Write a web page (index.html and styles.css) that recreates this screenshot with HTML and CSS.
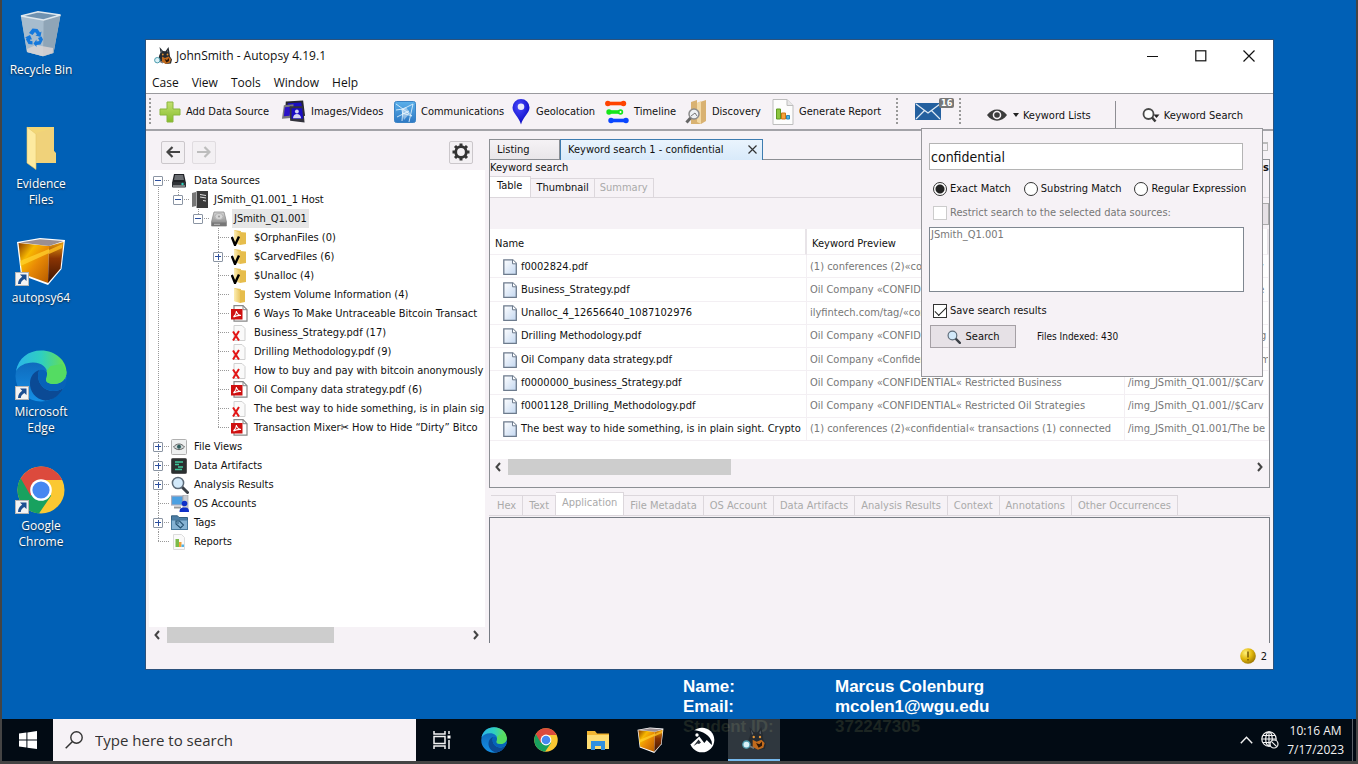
FILE: index.html
```html
<!DOCTYPE html>
<html lang="en">
<head>
<meta charset="utf-8">
<title>JohnSmith - Autopsy 4.19.1</title>
<link rel="stylesheet" href="styles.css">
</head>
<body>
<svg class="defs" aria-hidden="true">
  <defs>
    <linearGradient id="gGreen" x1="0" y1="0" x2="0" y2="1"><stop offset="0" stop-color="#c3e06f"/><stop offset="1" stop-color="#86bd2c"/></linearGradient>
    <linearGradient id="gFolder" x1="0" y1="0" x2="1" y2="0"><stop offset="0" stop-color="#fdeeb2"/><stop offset="1" stop-color="#eac765"/></linearGradient>
    <linearGradient id="gCube" x1="0" y1="0" x2="1" y2="1"><stop offset="0" stop-color="#8a3a00"/><stop offset=".3" stop-color="#f7b800"/><stop offset=".55" stop-color="#e98a05"/><stop offset="1" stop-color="#b65a00"/></linearGradient>
    <linearGradient id="gCubeR" x1="0" y1="0" x2="0" y2="1"><stop offset="0" stop-color="#e39a10"/><stop offset=".4" stop-color="#8a3403"/><stop offset="1" stop-color="#3d1503"/></linearGradient>
    <linearGradient id="gEdgeA" x1="0" y1="0" x2="1" y2="0"><stop offset="0" stop-color="#2bb5ea"/><stop offset=".5" stop-color="#2fcfc0"/><stop offset="1" stop-color="#6be04a"/></linearGradient>
    <linearGradient id="gEdgeB" x1="0" y1="0" x2="0" y2="1"><stop offset="0" stop-color="#0d5fb0"/><stop offset="1" stop-color="#1590e6"/></linearGradient>
    <linearGradient id="gDoc" x1="0" y1="0" x2="1" y2="1"><stop offset="0" stop-color="#ffffff"/><stop offset="1" stop-color="#c3d7f0"/></linearGradient>
    <linearGradient id="gSky" x1="0" y1="0" x2="0" y2="1"><stop offset="0" stop-color="#5bb0ea"/><stop offset="1" stop-color="#2d78c4"/></linearGradient>
    <radialGradient id="gPin" cx=".4" cy=".3" r=".8"><stop offset="0" stop-color="#4a4aff"/><stop offset="1" stop-color="#0000b8"/></radialGradient>
    <radialGradient id="gGold" cx=".35" cy=".3" r=".8"><stop offset="0" stop-color="#fff07a"/><stop offset=".5" stop-color="#e2b80c"/><stop offset="1" stop-color="#8f6a00"/></radialGradient>
    <linearGradient id="gHdd" x1="0" y1="0" x2="0" y2="1"><stop offset="0" stop-color="#d6d6d6"/><stop offset="1" stop-color="#7d7d7d"/></linearGradient>

    <symbol id="shortcut" viewBox="0 0 14 14"><rect x=".5" y=".5" width="13" height="13" fill="#f4f4f4" stroke="#b5b5b5"/><path d="M5 2.500h6.500V9L9.300 6.900C7 8.600 6 9.800 5.800 12H3c.1-3.300 1.500-5.400 4.200-7.200z" fill="#1d4f91"/></symbol>

    <symbol id="bin" viewBox="0 0 42 46">
      <path d="M1 5 18 .8 40.500 4 33.500 42 23 45.200 7 41z" fill="#b9c7d3"/>
      <path d="M1 5 23.500 9 23 45.200 7 41z" fill="#a7bccd"/><path d="M23.500 9 40.500 4 33.500 42 23 45.200z" fill="#8fa5b7"/>
      <path d="M1 5 18 .8 40.500 4 23.500 9z" fill="#6f92b0" stroke="#dfe8ee" stroke-width="1.400"/>
      <path d="m7 38 9-4 17 3-.2 5L23 45.200 7 41z" fill="#ddd6d4" opacity=".8"/>
      <g fill="#1478dc"><path d="m9 22 3.500-4.500 5 .5 2.500 3.500 1.500-1-1 5.500-5-1.500 1.500-1-2-2.500-2.500 3z"/><path d="m18 27 3.500-1.500 1.500 3-2.500 5-4 .5v2l-3-3.500 3-4v2l3-.5z"/><path d="m12.500 33.500-4-.5L6 28.500 6.500 27 5 26.500l5-2.500 2 4.500-1.500-.3-.5 1.500 2.500.5z"/></g>
    </symbol>
    <symbol id="bigfolder" viewBox="0 0 30 44">
      <path d="M1 1h27v24l2 2v10H1z" fill="#f2d676"/><path d="M10 7 28 2v23l1.500 3v9H10z" fill="#f0d27a"/><path d="m1 1 9 7v35.500L1 37z" fill="#fdeaa0" stroke="#e5c86a" stroke-width=".6"/>
    </symbol>
    <symbol id="cube" viewBox="0 0 50 50">
      <path d="M1 5 24 1 49 3 45.500 32 32 48 5 38z" fill="#fff"/>
      <path d="M2.500 6 33 9 32 46 6 36.500z" fill="url(#gCube)"/><path d="M33 9 47.500 5 44.500 31.500 32 46z" fill="url(#gCubeR)"/>
      <path d="M4 5.500 24 2.200 47.500 4 33 9z" fill="#9b8f92"/><path d="M4 24 33 12l.2 4L4.500 29z" fill="#ffd22e" opacity=".75"/><path d="m33 13 13.500-6-.3 4L33 17z" fill="#ffbf20" opacity=".8"/>
    </symbol>
    <symbol id="edge" viewBox="0 0 52 52">
      <circle cx="26" cy="26" r="25.500" fill="url(#gEdgeB)"/>
      <path d="M1 21C3.500 8 13.500.5 26 .5 41 .5 51.500 11 51.500 22c0 7-5 12-12 12-6 0-8.500-2-8.500-4 0-1.600 1.500-2.500 1.500-6C32.500 18 27 12.500 18 12.500 10 12.500 4 16 1 21z" fill="url(#gEdgeA)"/>
      <path d="M30.500 50.800C20 49 14.500 41 15 32.500c.4-6 4-11 9.500-12.500-4 6 0 20 13 21 4 .3 7.500-1 11-3-4 7.500-10.500 12-18 12.800z" fill="#0b4a95"/>
      <path d="M24.500 20c4-1 7.500 1 8 4 0 3.500-1.500 4.400-1.500 6 0 2 2.500 4 8.500 4 4.500 0 8-2 10-5l2 1c0 4-1.500 7-3 8-3.500 2-7 3.300-11 3-13-1-17-15-13-21z" fill="#0762b8"/>
      <path d="M31 30c0 2 2.500 4 8.500 4 7 0 12-5 12-12l-4-8-12 2-4 5c1.500 4-.5 6.500-.5 9z" fill="#54dc62"/>
    </symbol>
    <symbol id="chrome" viewBox="0 0 48 48">
      <circle cx="24" cy="24" r="23.500" fill="#fbc832"/>
      <path d="M24 24 3.700 12.200A23.500 23.500 0 0 0 22 47.400L34.300 29.500z" fill="#18a15f"/>
      <path d="M3.700 12.200A23.500 23.500 0 0 1 45.200 14H24L13.800 30z" fill="#dc4a3d"/>
      <circle cx="24" cy="24" r="10.800" fill="#fff"/><circle cx="24" cy="24" r="8.600" fill="#4688f1"/>
    </symbol>
    <symbol id="dog" viewBox="0 0 18 18">
      <path d="M5.500 0 9 4l2.500.2L14.500 0l1 5.500.5 4 2 3-1 4-5 .5-3-2-4.500-1L5 9l1.500-3.500z" fill="#252b31"/>
      <path d="m6.800 2 1.700 3-1 1zM13.800 2.500l.6 3-1.500-.8z" fill="#5f666c"/>
      <path d="m8 9.500 3 1.500 3.500-1.500L17 12l-1 3.500-4 1.500-4-2z" fill="#c26a1c"/><path d="m10.500 12 2.500 1 2-2v3l-2.500 1.500z" fill="#2c1708"/><circle cx="8.800" cy="7.500" r=".9" fill="#e59435"/><circle cx="13.500" cy="7.500" r=".9" fill="#e59435"/>
      <circle cx="3.300" cy="13.200" r="2.700" fill="#d9f1f7" stroke="#4c9bad"/><path d="m6 14.500 3 1.500" stroke="#777" stroke-width="1.300"/>
    </symbol>

    <symbol id="plus" viewBox="0 0 22 22"><path d="M8 1h6v7h7v6h-7v7H8v-7H1V8h7z" fill="url(#gGreen)" stroke="#8ab63e"/></symbol>
    <symbol id="images" viewBox="0 0 26 24">
      <path d="m5 1 18-1 2 16-4 1H4z" fill="#26262e"/><path d="m7 3 14-1 1 5-15 3z" fill="#1b0fc0"/><path d="m3 5 10-1v14l-12 1z" fill="#77777e"/><path d="m4 7 6-.5-1 9.500-6 .5z" fill="#2a12c8"/>
      <path d="M9 6h14l1.500 17-15-2z" fill="#33333c"/><path d="M11 8h11l1 11H11z" fill="#1a0cc4"/><circle cx="16.500" cy="11.500" r="2" fill="#d5d5f0"/><path d="M12.500 18.500c0-6 8-6 8.500 0z" fill="#d5d5f0"/>
    </symbol>
    <symbol id="comm" viewBox="0 0 22 22"><rect x=".5" y=".5" width="21" height="21" rx="2" fill="url(#gSky)" stroke="#3b83c4"/><path d="m2 3 7 5 10-5M9 8l-1 12M8 12l10 3M19 3 15 21M3 16l12-6M2 9l7-1M9 8l9 7" stroke="#d9edfb" fill="none" stroke-width=".9"/><path d="m7 8 5-2 4 6-6 7z" fill="#fff" opacity=".45"/></symbol>
    <symbol id="pin" viewBox="0 0 18 26"><path d="M9 25.500C7 18 .5 14 .5 8.500a8.500 8.500 0 0 1 17 0C17.500 14 11 18 9 25.500z" fill="url(#gPin)"/><circle cx="9" cy="7.800" r="3.300" fill="#e9e9fa"/></symbol>
    <symbol id="timeline" viewBox="0 0 24 24"><g stroke-width="3.600"><path d="M2 3.500h17" stroke="#ff4300"/><path d="M4 12h12" stroke="#16e51a"/><path d="M5 20.500h17" stroke="#0a46ff"/></g><g fill="#ff4300"><circle cx="2.800" cy="3.500" r="2.700"/><circle cx="18.500" cy="3.500" r="2.700"/></g><g fill="#16e51a"><circle cx="4" cy="12" r="2.700"/><circle cx="15.500" cy="12" r="2.700"/></g><circle cx="15.500" cy="12" r="1" fill="#fff"/><g fill="#0a46ff"><circle cx="6" cy="20.500" r="2.700"/><circle cx="21" cy="20.500" r="2.700"/></g></symbol>
    <symbol id="discovery" viewBox="0 0 22 26"><path d="m6 3 6-2v3l9-3v21l-5 3H6z" fill="#d9b272"/><path d="m12 4 4-2v23l-4-2z" fill="#f3d9a5"/><circle cx="9" cy="15" r="5" fill="#eef1f3" stroke="#8b8b8b" stroke-width="1.500"/><path d="m5.500 19-4 4.500" stroke="#666" stroke-width="3"/><path d="m6 17 4-3 2 3" stroke="#777" fill="none"/></symbol>
    <symbol id="report" viewBox="0 0 22 26"><path d="M1 .5h14l6 6v19H1z" fill="#fdfdfd" stroke="#bdbdbd"/><path d="M15 .5v6h6" fill="#e8e8e8" stroke="#bdbdbd"/><path d="M4.500 10h4v10h-4z" fill="#8cc63f" stroke="#5f9a22"/><path d="M9.500 14h4v6h-4z" fill="#f5a33b" stroke="#cf7714"/><path d="M14.500 16.500h3V20h-3z" fill="#4ab4e6" stroke="#2b86b5"/></symbol>
    <symbol id="mail" viewBox="0 0 26 17"><rect width="26" height="17" rx="1" fill="#24609f"/><path d="m1 1 12 9L25 1M1 16l8.500-8.500M25 16l-8.500-8.500" stroke="#dfeaf5" fill="none" stroke-width="1.200"/></symbol>
    <symbol id="eye" viewBox="0 0 20 12"><path d="M0 6C5-1.500 15-1.500 20 6 15 13.500 5 13.500 0 6z" fill="#3c3c3c"/><circle cx="10" cy="6" r="4.300" fill="#f6f2f6"/><circle cx="10" cy="6" r="2.800" fill="#3c3c3c"/></symbol>
    <symbol id="kwsearch" viewBox="0 0 18 15"><circle cx="6.500" cy="6" r="5" fill="#fdfdfd" stroke="#4a4a4a" stroke-width="1.800"/><path d="m10 9.500 3.500 4" stroke="#3a3a3a" stroke-width="2.500"/><path d="M11.500 6.500h6l-3 3.500z" fill="#222"/></symbol>
    <symbol id="mag" viewBox="0 0 18 18"><path d="m10.500 10.500 6 6" stroke="#3a3f46" stroke-width="3" stroke-linecap="round"/><circle cx="7" cy="7" r="5.600" fill="#d2e9fa" stroke="#5c6a78" stroke-width="1.500"/></symbol>

    <symbol id="arrow" viewBox="0 0 14 12"><path d="M6.500 1 1.500 6l5 5M2 6h12" fill="none" stroke="currentColor" stroke-width="2.200"/></symbol>
    <symbol id="gear" viewBox="0 0 18 18"><circle cx="9" cy="9" r="5.300" fill="none" stroke="#333" stroke-width="2.800"/><path d="M9 .5v3M9 14.500v3M.5 9h3M14.500 9h3M3 3l2 2M13 13l2 2M15 3l-2 2M5 13l-2 2" stroke="#333" stroke-width="3"/></symbol>

    <symbol id="drive" viewBox="0 0 16 16"><path d="M3 1h10l2 9H1z" fill="#1f2226"/><path d="M4 2h8l1 5H3z" fill="#6a6e72"/><rect x="1" y="9" width="14" height="5.500" rx="1" fill="#2f3337"/><path d="M2 13h12" stroke="#c8c8c8"/><circle cx="11.500" cy="11" r="1.200" fill="#2fd6c0"/></symbol>
    <symbol id="host" viewBox="0 0 18 17"><path d="m1 2 4-1v14l-4 1z" fill="#777"/><path d="M5 0h12v17H5z" fill="#3b3b3b"/><path d="M9 3.500l6 1M9 6l6 1M12 9.500l3 .5" stroke="#e0e0e0"/><path d="M5.500 0v17" stroke="#aaa"/></symbol>
    <symbol id="hdd" viewBox="0 0 16 16"><path d="M3 1h10l2.500 10v4H.5v-4z" fill="url(#gHdd)" stroke="#8c8c8c" stroke-width=".8"/><ellipse cx="8" cy="5.500" rx="4" ry="3.200" fill="#d5d5d5" stroke="#aaa" stroke-width=".7"/><circle cx="8" cy="5.500" r="1" fill="#999"/><path d="M1 11.500h14V15H1z" fill="#777"/><path d="M3 13.300h6" stroke="#bbb"/></symbol>
    <symbol id="folder" viewBox="0 0 16 16"><path d="m3 1 7 1v1l4 .5V15H9l-6-1z" fill="#e9c45a"/><path d="m3 1 6 3v12l-6-2z" fill="url(#gFolder)"/><path d="M9 4h5v11l-5 1z" fill="#e6bd4c"/></symbol>
    <symbol id="vfolder" viewBox="0 0 16 16"><path d="m3 0 7 1v1l5 .5V14H9l-6-1z" fill="#e9c45a"/><path d="m3 0 6 3v12l-6-2z" fill="url(#gFolder)"/><path d="M9 3h6v11l-6 1z" fill="#e6bd4c"/><path d="m.8 7 3.200 8L8 6.500" fill="none" stroke="#000" stroke-width="2.400"/></symbol>
    <symbol id="pdf" viewBox="0 0 17 17"><path d="M3 .7h9l4 4v11.500H3z" fill="#fff" stroke="#888" stroke-width="1.200"/><path d="M12 .7v4h4" fill="none" stroke="#888"/><rect x="0" y="4" width="11.500" height="10.500" fill="#cf1010"/><path d="M2.500 12c2-2 3-4.500 3-6 .4 3 2 4 4.500 4.500-2.500-.3-5 .2-7.500 1.500z" fill="none" stroke="#fff" stroke-width="1.100"/></symbol>
    <symbol id="xdoc" viewBox="0 0 16 16"><path d="M3 .5h8l3 3v12H3z" fill="#fafafa" stroke="#d0d0d0"/><path d="m2 6.500 6 9M8 6 2 15.500" stroke="#e31616" stroke-width="2"/></symbol>
    <symbol id="views" viewBox="0 0 16 16"><rect x=".5" y=".5" width="15" height="15" rx="1" fill="#eef0f0" stroke="#b0b0b0"/><path d="M2.500 8c3-4 8-4 11 0-3 3.500-8 3.500-11 0z" fill="#cfd6d6" stroke="#555" stroke-width=".9"/><circle cx="8" cy="7.800" r="2" fill="#2c5a5a"/></symbol>
    <symbol id="artifacts" viewBox="0 0 16 16"><rect x=".5" y=".5" width="15" height="15" rx="1" fill="#2b3030" stroke="#555"/><path d="M4 4h8M4 6.500h4M7 9h5M4 11.500h7" stroke="#3fc79a" stroke-width="1.500"/></symbol>
    <symbol id="accounts" viewBox="0 0 18 17"><rect x=".5" y="1" width="11.500" height="9" fill="#4ba0e2" stroke="#aab" stroke-width="1.200"/><path d="M3 12.500h7" stroke="#999" stroke-width="2"/><path d="M12 0h5v14h-5z" fill="#c9ccd2" stroke="#999" stroke-width=".6"/><circle cx="13.500" cy="8.500" r="2.800" fill="#1030c8"/><path d="M8.500 17c0-4 2-4.500 5-4.500s4.500.5 4.500 4.500z" fill="#1030c8"/></symbol>
    <symbol id="tags" viewBox="0 0 17 15"><path d="M.5 2V.8h6L8 2.500h8.500v12H.5z" fill="#4c7ea6" stroke="#35607f"/><path d="M.5 5h16v9.500H.5z" fill="#86b3d3" stroke="#46789c"/><path d="M5 6h3.500l4 4L9.500 13 5 9z" fill="none" stroke="#24506f" stroke-width="1.100"/><circle cx="7" cy="8" r=".8" fill="#24506f"/></symbol>
    <symbol id="minireport" viewBox="0 0 16 16"><path d="M2.500.5h8l3 3v12h-11z" fill="#fafafa" stroke="#dcdcdc"/><path d="M4.500 5H8v8H4.500z" fill="#7cbb4a"/><path d="M8 8h2.500v5H8z" fill="#f0a23a"/><path d="M10.500 10.500H13V13h-2.500z" fill="#52b4e8"/></symbol>
    <symbol id="doc" viewBox="0 0 14 16"><path d="M.8.8h9l3.500 3.500v11H.8z" fill="url(#gDoc)" stroke="#6d7b8d" stroke-width="1.300"/><path d="M9.500.8v4h4" fill="#fff" stroke="#6d7b8d"/></symbol>
    <symbol id="chev" viewBox="0 0 6 10"><path d="M5 1 1.500 5 5 9" fill="none" stroke="#444" stroke-width="2"/></symbol>

    <symbol id="win" viewBox="0 0 18 18"><path d="M0 2.600 7.400 1.600v7H0zM8.400 1.400 18 0v8.600H8.400zM0 9.600h7.400v7L0 15.500zM8.400 9.600H18V18l-9.600-1.300z" fill="#fff"/></symbol>
    <symbol id="tbsearch" viewBox="0 0 18 18"><circle cx="11.500" cy="6.500" r="5.700" fill="none" stroke="#333" stroke-width="1.400"/><path d="M7.500 10.500.7 17.300" stroke="#333" stroke-width="1.500"/></symbol>
    <symbol id="taskview" viewBox="0 0 20 18"><g fill="none" stroke="#f2f2f2" stroke-width="1.500"><path d="M2 0v3h11V0M2 18v-3h11v3"/><rect x="2" y="5.500" width="11" height="7"/><path d="M17 0v3M17 9v9"/></g><rect x="15.500" y="4.500" width="3" height="3" fill="#fff"/></symbol>
    <symbol id="explorer" viewBox="0 0 24 22"><path d="M1 2h8l2 2.500h12V20H1z" fill="#f2b632"/><path d="M1 6h22v14H1z" fill="#fddc73"/><path d="M5 12h14v9h-4v-4H9v4H5z" fill="#3190df"/></symbol>
    <symbol id="photos" viewBox="0 0 26 26"><circle cx="13" cy="13" r="12.300" fill="#fff"/><path d="M0 5 3.500 3C10 3.500 19 5.500 22.500 14c.3 1.500.5 2.500.3 4l-5-5-2.500 3-5-6.500L2 17 0 17z" fill="#020b14"/><circle cx="8" cy="8" r="1.700" fill="#fff"/><path d="m4.500 19 5-6.500 2.500 3-2 1.500-1.500-.5z" fill="#020b14" opacity=".85"/></symbol>
    <symbol id="globe" viewBox="0 0 18 18"><g fill="none" stroke="#f2f2f2" stroke-width="1.200"><circle cx="8" cy="8" r="7.200"/><ellipse cx="8" cy="8" rx="3.300" ry="7.200"/><path d="M1 8h14M2 4.500h12M2 11.500h8M8 1v14"/></g><circle cx="13" cy="13" r="4" fill="#020b14" stroke="#f2f2f2" stroke-width="1.200"/><path d="m10.300 10.300 5.400 5.400" stroke="#f2f2f2" stroke-width="1.200"/></symbol>
  </defs>
</svg>

<div class="screen">
  <main class="desktop">
    <nav class="shortcuts" aria-label="Desktop">
      <a class="shortcut" href="#"><span class="pic"><svg width="42" height="46"><use href="#bin"/></svg></span>Recycle Bin</a>
      <a class="shortcut" href="#"><span class="pic"><svg width="30" height="44"><use href="#bigfolder"/></svg></span>Evidence<br>Files</a>
      <a class="shortcut" href="#"><span class="pic"><svg width="50" height="50"><use href="#cube"/></svg><svg class="link-mark" width="14" height="14"><use href="#shortcut"/></svg></span>autopsy64</a>
      <a class="shortcut" href="#"><span class="pic"><svg width="52" height="52"><use href="#edge"/></svg><svg class="link-mark" width="14" height="14"><use href="#shortcut"/></svg></span>Microsoft<br>Edge</a>
      <a class="shortcut" href="#"><span class="pic"><svg width="48" height="48"><use href="#chrome"/></svg><svg class="link-mark" width="14" height="14"><use href="#shortcut"/></svg></span>Google<br>Chrome</a>
    </nav>

    <dl class="owner">
      <dt>Name:</dt><dd>Marcus Colenburg</dd>
      <dt>Email:</dt><dd>mcolen1@wgu.edu</dd>
      <dt class="faded">Student ID:</dt><dd class="faded">372247305</dd>
    </dl>

    <section class="window">
      <header class="titlebar">
        <svg width="18" height="18"><use href="#dog"/></svg>
        <h1>JohnSmith - Autopsy 4.19.1</h1>
        <button class="caption" aria-label="Minimize"><svg width="12" height="12" viewBox="0 0 12 12"><path d="M0 6.500h11" stroke="#111"/></svg></button>
        <button class="caption" aria-label="Maximize"><svg width="12" height="12" viewBox="0 0 12 12"><rect x=".8" y=".8" width="10" height="10" fill="none" stroke="#111" stroke-width="1.200"/></svg></button>
        <button class="caption" aria-label="Close"><svg width="12" height="12" viewBox="0 0 12 12"><path d="m.5.5 11 11M11.500.5l-11 11" stroke="#111" stroke-width="1.200"/></svg></button>
      </header>
      <nav class="menubar"><button>Case</button><button>View</button><button>Tools</button><button>Window</button><button>Help</button></nav>

      <div class="toolbar">
        <span class="grip"></span>
        <div class="tools">
          <button><svg width="22" height="22"><use href="#plus"/></svg>Add Data Source</button>
          <button><svg width="25" height="24"><use href="#images"/></svg>Images/Videos</button>
          <button><svg width="22" height="22"><use href="#comm"/></svg>Communications</button>
          <button><svg width="20" height="26"><use href="#pin"/></svg>Geolocation</button>
          <button><svg width="24" height="24"><use href="#timeline"/></svg>Timeline</button>
          <button><svg width="22" height="26"><use href="#discovery"/></svg>Discovery</button>
          <button><svg width="22" height="26"><use href="#report"/></svg>Generate Report</button>
        </div>
        <span class="grip"></span>
        <button class="messages" aria-label="Messages"><svg width="26" height="17"><use href="#mail"/></svg><span class="badge">16</span></button>
        <span class="grip"></span>
        <div class="keyword-tools">
          <button><svg width="20" height="12"><use href="#eye"/></svg><span class="caret"></span>Keyword Lists</button>
          <button><svg width="18" height="15"><use href="#kwsearch"/></svg>Keyword Search</button>
        </div>

        <form class="popup">
          <input class="query" type="text" value="confidential" aria-label="Keyword">
          <div class="modes">
            <label><input type="radio" name="mode" checked>Exact Match</label>
            <label><input type="radio" name="mode">Substring Match</label>
            <label><input type="radio" name="mode">Regular Expression</label>
          </div>
          <label class="check off"><input type="checkbox" disabled>Restrict search to the selected data sources:</label>
          <select class="sources" multiple size="2" disabled aria-label="Data sources"><option>JSmith_Q1.001</option></select>
          <label class="check"><input type="checkbox" checked>Save search results</label>
          <div class="go"><button type="button"><svg width="14" height="14"><use href="#mag"/></svg>Search</button><span>Files Indexed: 430</span></div>
        </form>
      </div>

      <div class="body">
        <aside class="explorer">
          <div class="nav-buttons">
            <button aria-label="Back"><svg width="14" height="12"><use href="#arrow"/></svg></button>
            <button aria-label="Forward" disabled><svg class="flip" width="14" height="12"><use href="#arrow"/></svg></button>
            <button class="options" aria-label="Options"><svg width="18" height="18"><use href="#gear"/></svg></button>
          </div>
          <div class="tree-box">
            <ul class="tree">
              <li><div class="node"><span class="stub"><button class="toggle open" aria-label="Collapse"></button></span><svg width="16" height="16"><use href="#drive"/></svg><span>Data Sources</span></div>
                <ul>
                  <li><div class="node"><span class="stub"><button class="toggle open" aria-label="Collapse"></button></span><svg width="18" height="17"><use href="#host"/></svg><span>JSmith_Q1.001_1 Host</span></div>
                    <ul>
                      <li><div class="node picked"><span class="stub"><button class="toggle open" aria-label="Collapse"></button></span><svg width="16" height="16"><use href="#hdd"/></svg><span>JSmith_Q1.001</span></div>
                        <ul>
                          <li><div class="node"><span class="stub"></span><svg width="16" height="16"><use href="#vfolder"/></svg><span>$OrphanFiles (0)</span></div></li>
                          <li><div class="node"><span class="stub"><button class="toggle" aria-label="Expand"></button></span><svg width="16" height="16"><use href="#vfolder"/></svg><span>$CarvedFiles (6)</span></div></li>
                          <li><div class="node"><span class="stub"></span><svg width="16" height="16"><use href="#vfolder"/></svg><span>$Unalloc (4)</span></div></li>
                          <li><div class="node"><span class="stub"></span><svg width="16" height="16"><use href="#folder"/></svg><span>System Volume Information (4)</span></div></li>
                          <li><div class="node"><span class="stub"></span><svg width="17" height="17"><use href="#pdf"/></svg><span>6 Ways To Make Untraceable Bitcoin Transact</span></div></li>
                          <li><div class="node"><span class="stub"></span><svg width="16" height="16"><use href="#xdoc"/></svg><span>Business_Strategy.pdf (17)</span></div></li>
                          <li><div class="node"><span class="stub"></span><svg width="16" height="16"><use href="#xdoc"/></svg><span>Drilling Methodology.pdf (9)</span></div></li>
                          <li><div class="node"><span class="stub"></span><svg width="16" height="16"><use href="#xdoc"/></svg><span>How to buy and pay with bitcoin anonymously</span></div></li>
                          <li><div class="node"><span class="stub"></span><svg width="17" height="17"><use href="#pdf"/></svg><span>Oil Company data strategy.pdf (6)</span></div></li>
                          <li><div class="node"><span class="stub"></span><svg width="16" height="16"><use href="#xdoc"/></svg><span>The best way to hide something, is in plain sig</span></div></li>
                          <li><div class="node"><span class="stub"></span><svg width="17" height="17"><use href="#pdf"/></svg><span>Transaction Mixer✂ How to Hide “Dirty” Bitco</span></div></li>
                        </ul>
                      </li>
                    </ul>
                  </li>
                </ul>
              </li>
              <li><div class="node"><span class="stub"><button class="toggle" aria-label="Expand"></button></span><svg width="16" height="16"><use href="#views"/></svg><span>File Views</span></div></li>
              <li><div class="node"><span class="stub"><button class="toggle" aria-label="Expand"></button></span><svg width="16" height="16"><use href="#artifacts"/></svg><span>Data Artifacts</span></div></li>
              <li><div class="node"><span class="stub"><button class="toggle" aria-label="Expand"></button></span><svg width="18" height="18"><use href="#mag"/></svg><span>Analysis Results</span></div></li>
              <li><div class="node"><span class="stub"></span><svg width="18" height="17"><use href="#accounts"/></svg><span>OS Accounts</span></div></li>
              <li><div class="node"><span class="stub"><button class="toggle" aria-label="Expand"></button></span><svg width="17" height="15"><use href="#tags"/></svg><span>Tags</span></div></li>
              <li><div class="node"><span class="stub"></span><svg width="16" height="16"><use href="#minireport"/></svg><span>Reports</span></div></li>
            </ul>
          </div>
          <div class="scroll"><svg width="6" height="10"><use href="#chev"/></svg><div class="track"><div class="thumb"></div></div><svg class="flip" width="6" height="10"><use href="#chev"/></svg></div>
        </aside>

        <div class="views">
          <div class="tabs"><button>Listing</button><button class="on">Keyword search 1 - confidential<svg width="9" height="9" viewBox="0 0 9 9"><path d="m.5.5 8 8m0-8-8 8" stroke="#333" stroke-width="1.200"/></svg></button><span class="restore"></span></div>
          <section class="results">
            <div class="caption-row"><span>Keyword search</span><b>8 Results</b></div>
            <div class="subtabs"><button class="on">Table</button><button>Thumbnail</button><button disabled>Summary</button></div>
            <div class="table-tools"><button aria-label="Save table as CSV"></button></div>
            <div class="table-box">
              <table>
                <colgroup><col class="c-name"><col class="c-preview"><col></colgroup>
                <thead><tr><th>Name</th><th>Keyword Preview</th><th>Location</th></tr></thead>
                <tbody>
                  <tr><td><svg width="14" height="16"><use href="#doc"/></svg>f0002824.pdf</td><td>(1) conferences (2)«confidential« transactions (1)</td><td>/img_JSmith_Q1.001//$Carv</td></tr>
                  <tr><td><svg width="14" height="16"><use href="#doc"/></svg>Business_Strategy.pdf</td><td>Oil Company «CONFIDENTIAL« Restricted Business</td><td>/img_JSmith_Q1.001/Busine</td></tr>
                  <tr><td><svg width="14" height="16"><use href="#doc"/></svg>Unalloc_4_12656640_1087102976</td><td>ilyfintech.com/tag/«confidential«</td><td>/img_JSmith_Q1.001//$Unal</td></tr>
                  <tr><td><svg width="14" height="16"><use href="#doc"/></svg>Drilling Methodology.pdf</td><td>Oil Company «CONFIDENTIAL« Restricted Oil Strategies</td><td>/img_JSmith_Q1.001/Drilling</td></tr>
                  <tr><td><svg width="14" height="16"><use href="#doc"/></svg>Oil Company data strategy.pdf</td><td>Oil Company «Confidential« Restricted</td><td>/img_JSmith_Q1.001/Oil Com</td></tr>
                  <tr><td><svg width="14" height="16"><use href="#doc"/></svg>f0000000_business_Strategy.pdf</td><td>Oil Company «CONFIDENTIAL« Restricted Business</td><td>/img_JSmith_Q1.001//$Carv</td></tr>
                  <tr><td><svg width="14" height="16"><use href="#doc"/></svg>f0001128_Drilling_Methodology.pdf</td><td>Oil Company «CONFIDENTIAL« Restricted Oil Strategies</td><td>/img_JSmith_Q1.001//$Carv</td></tr>
                  <tr><td><svg width="14" height="16"><use href="#doc"/></svg>The best way to hide something, is in plain sight. Crypto</td><td>(1) conferences (2)«confidential« transactions (1) connected</td><td>/img_JSmith_Q1.001/The be</td></tr>
                </tbody>
              </table>
            </div>
            <div class="scroll"><svg width="6" height="10"><use href="#chev"/></svg><div class="track"><div class="thumb wide"></div></div><svg class="flip" width="6" height="10"><use href="#chev"/></svg></div>
          </section>
          <div class="content-tabs"><button disabled>Hex</button><button disabled>Text</button><button class="on" disabled>Application</button><button disabled>File Metadata</button><button disabled>OS Account</button><button disabled>Data Artifacts</button><button disabled>Analysis Results</button><button disabled>Context</button><button disabled>Annotations</button><button disabled>Other Occurrences</button></div>
          <section class="content"></section>
        </div>
      </div>
      <footer class="status"><svg width="16" height="16" viewBox="0 0 16 16"><circle cx="8" cy="8" r="7.800" fill="url(#gGold)"/><path d="M8 3.500v6M8 11v1.500" stroke="#7a5a00" stroke-width="1.500"/></svg>2</footer>
    </section>
  </main>

  <footer class="taskbar">
    <button class="start" aria-label="Start"><svg width="18" height="18"><use href="#win"/></svg></button>
    <label class="find"><svg width="18" height="18"><use href="#tbsearch"/></svg><input type="text" placeholder="Type here to search" aria-label="Type here to search"></label>
    <div class="apps">
      <button aria-label="Task View"><svg width="20" height="18"><use href="#taskview"/></svg></button>
      <button aria-label="Microsoft Edge"><svg width="26" height="26"><use href="#edge"/></svg></button>
      <button aria-label="Google Chrome"><svg width="24" height="24"><use href="#chrome"/></svg></button>
      <button aria-label="File Explorer"><svg width="24" height="22"><use href="#explorer"/></svg></button>
      <button aria-label="autopsy64"><svg width="27" height="27"><use href="#cube"/></svg></button>
      <button aria-label="Photos"><svg width="26" height="26"><use href="#photos"/></svg></button>
      <button class="active" aria-label="Autopsy"><svg width="24" height="24"><use href="#dog"/></svg></button>
    </div>
    <div class="tray">
      <svg width="13" height="8" viewBox="0 0 13 8"><path d="m.8 7.200 5.700-6 5.700 6" fill="none" stroke="#f2f2f2" stroke-width="1.400"/></svg>
      <svg width="18" height="18"><use href="#globe"/></svg>
      <time>10:16 AM<br>7/17/2023</time>
      <span class="peek"></span>
    </div>
  </footer>
</div>
</body>
</html>
```
FILE: styles.css
```css
:root {
  --pane: #f6f2f6;
  --line: #8c8f94;
  --soft: #dcd7dc;
  --ui: "DejaVu Sans Condensed", "Noto Sans", sans-serif;
  --segoe: "Open Sans", "Noto Sans", sans-serif;
}
* { box-sizing: border-box; }
body { margin: 0; background: #444; font: 11px/19px var(--ui); color: #111; }
button { font: inherit; color: inherit; border: 0; background: none; padding: 0; margin: 0; }
input, select { font: inherit; margin: 0; }
svg { flex: none; display: block; overflow: visible; }
.defs { position: absolute; width: 0; height: 0; }
.flip { transform: scaleX(-1); }

.screen { display: flex; flex-direction: column; height: 100vh; min-height: 720px; padding: 0 2px 3px; }
.desktop { position: relative; flex: 1; background: #0060b6; }

/* Desktop shortcuts */
.shortcuts { display: grid; grid-auto-rows: 114px; width: 78px; padding-top: 6px; }
.shortcut { display: block; text-align: center; color: #fff; text-decoration: none; font: 12px/16px var(--segoe); text-shadow: 0 1px 2px #123; }
.pic { position: relative; display: flex; align-items: center; justify-content: center; height: 56px; }
.link-mark { position: absolute; left: 13px; bottom: 4px; }

.owner { position: absolute; z-index: 1; left: 681px; top: 677px; margin: 0; display: grid; grid-template-columns: 152px auto; font: bold 17px/20px "Liberation Sans", Arial, sans-serif; color: #fff; }
.owner dd { margin: 0; }
.owner .faded { color: #1c2522; }

/* Application window */
.window { position: absolute; left: 143px; right: 82px; top: 39px; bottom: 49px; display: flex; flex-direction: column; background: var(--pane); border: 1px solid #2b527c; }
.titlebar { display: flex; align-items: center; height: 32px; padding-left: 8px; background: #fff; }
.titlebar h1 { flex: 1; margin: 0; padding-left: 4px; font: 12px/20px var(--segoe); }
.caption { display: flex; align-items: center; justify-content: center; width: 48px; height: 30px; }
.menubar { display: flex; gap: 13px; height: 21px; padding-left: 6px; background: #fff; font: 12px/19px var(--segoe); }
.toolbar { position: relative; display: flex; align-items: center; height: 38px; padding-left: 3px; border-top: 1px solid #9a9a9e; border-bottom: 2px solid #a3a3a8; }
.grip { flex: none; width: 2px; height: 27px; background: repeating-linear-gradient(#999 0 2px, transparent 2px 4px); }
.tools { display: grid; grid-template-columns: 122px 113px 117px 94px 80px 87px 124px; padding-left: 8px; }
.tools button { display: flex; align-items: center; gap: 5px; height: 30px; white-space: nowrap; }
.messages { position: relative; display: flex; align-items: center; width: 61px; height: 30px; padding-left: 17px; }
.badge { position: absolute; left: 41px; top: 1px; padding: 0 2px; border-radius: 2px; background: #777; color: #fff; font: bold 9px/10px var(--ui); }
.keyword-tools { display: flex; flex: 1; justify-content: flex-end; padding: 7px 30px 0 0; height: 100%; }
.keyword-tools button { display: flex; align-items: center; gap: 4px; white-space: nowrap; }
.keyword-tools button:first-child { padding-right: 24px; margin-right: 26px; border-right: 1px solid #8e8e93; }
.caret { margin-left: 2px; border: 3px solid transparent; border-top: 4px solid #222; border-bottom: 0; }

/* Keyword search drop-down */
.popup { position: absolute; z-index: 2; right: 10px; top: 34px; width: 342px; height: 249px; padding: 14px 7px; background: var(--pane); border: 1px solid #97979b; display: flex; flex-direction: column; align-items: flex-start; }
.query { width: 314px; height: 27px; padding: 0 1px; border: 1px solid #b4b4b4; background: #fff; color: #111; font-size: 14px; }
.modes { display: flex; gap: 13px; margin-top: 9px; padding-left: 4px; }
.modes label, .check { display: flex; align-items: center; gap: 3px; white-space: nowrap; }
.popup input[type=radio] { appearance: none; width: 14px; height: 14px; border: 1px solid #333; border-radius: 50%; background: #fff; }
.popup input[type=radio]:checked { background: radial-gradient(#222 0 4px, #fff 5px); }
.popup input[type=checkbox] { appearance: none; width: 14px; height: 14px; border: 1px solid #333; background: #fff; }
.popup input[type=checkbox]:checked::before { content: ""; display: block; width: 10px; height: 5px; margin: 2px 0 0 1px; border: solid #222; border-width: 0 0 1px 1px; rotate: -45deg; }
.popup input:disabled { border-color: #ccc; }
.check { padding-left: 4px; margin-top: 5px; }
.off { color: #777; }
.sources { appearance: none; width: 315px; height: 65px; margin: 5px 0 4px; padding: 0; border: 1px solid #7f8790; border-radius: 0; background: #fff; overflow: hidden; opacity: 1; }
.sources option { padding: 0 1px; color: #777; min-height: 0; line-height: 19px; }
.go { display: flex; align-items: center; gap: 21px; margin: 5px 0 0 1px; }
.go button { display: flex; align-items: center; justify-content: center; gap: 5px; width: 86px; height: 23px; border: 1px solid #a5a0a5; background: #e6e1e6; }
.go span { font-size: 10px; }

.body { display: flex; flex: 1; min-height: 0; padding-right: 3px; }

/* Tree pane */
.explorer { display: flex; flex-direction: column; width: 343px; padding: 0 4px 0 3px; }
.nav-buttons { display: flex; align-items: center; gap: 7px; height: 39px; padding: 3px 12px 0; }
.nav-buttons button { display: flex; align-items: center; justify-content: center; width: 24px; height: 23px; border: 1px solid #cbc7cb; border-radius: 2px; color: #444; background: #f3f0f3; }
.nav-buttons button:disabled { color: #bdbdbd; border-color: #e0dce0; }
.nav-buttons .options { margin-left: auto; }
.tree-box { flex: 1; min-height: 0; overflow: hidden; background: #fff; }
.tree, .tree ul { list-style: none; margin: 0; padding: 0; }
.tree { padding: 1px 0 0 4px; }
.tree ul { padding-left: 20px; }
.tree li { background: repeating-linear-gradient(#999 0 1px, transparent 1px 2px) 5px 0 / 1px 100% no-repeat; }
.tree li:last-child { background-size: 1px 10px; }
.tree > li:first-child { background-position: 5px 10px; }
.stub { display: flex; align-items: center; width: 18px; height: 19px; background: repeating-linear-gradient(90deg, #999 0 1px, transparent 1px 2px) 5px 9px / 12px 1px no-repeat; }
.node { display: grid; grid-template-columns: 18px 21px 1fr; align-items: center; justify-items: start; height: 19px; white-space: nowrap; }
.node > span:last-child { padding: 0 2px; }
.picked > span:last-child { background: #e6e6e6; }
.toggle { width: 10px; height: 10px; border: 1px solid #8b95a3; border-radius: 1px; background: linear-gradient(#2c4f9e, #2c4f9e) center / 6px 1px no-repeat, linear-gradient(#2c4f9e, #2c4f9e) center / 1px 6px no-repeat, #fff; }
.toggle.open { background: linear-gradient(#2c4f9e, #2c4f9e) center / 6px 1px no-repeat, #fff; }
.scroll { display: flex; align-items: center; gap: 7px; height: 16px; padding: 0 6px 0 5px; }
.track { flex: 1; }
.thumb { width: 56%; height: 16px; background: #cdcdcd; }
.thumb.wide { width: 30%; }

/* Result views */
.views { display: flex; flex-direction: column; flex: 1; min-width: 0; padding-top: 8px; }
.tabs { display: flex; height: 21px; border-bottom: 1px solid var(--line); }
.tabs button { width: 71px; height: 20px; padding: 0 7px; line-height: 17px; text-align: left; border: 1px solid var(--line); border-bottom: 0; background: linear-gradient(#f5f2f5, #e9e6e9); white-space: nowrap; }
.tabs .on { display: flex; align-items: center; justify-content: space-between; width: 203px; height: 21px; padding: 0 5px 2px 7px; border-color: #3d7cb0; background: linear-gradient(#eaf4fd, #d8eafa); }
.restore { width: 7px; height: 9px; margin: 3px 2px 0 auto; border: 1px solid #bbb; border-top-width: 2px; }
.results { border: solid var(--line); border-width: 0 1px 1px; padding-bottom: 12px; }
.caption-row { display: flex; justify-content: space-between; height: 17px; line-height: 15px; }
.subtabs { display: flex; align-items: flex-end; height: 21px; border-bottom: 1px solid var(--soft); }
.subtabs button { height: 19px; padding: 0 5px; line-height: 18px; border: 1px solid var(--soft); border-left: 0; border-bottom: 0; }
.subtabs .on { height: 21px; padding: 0 8px 2px 7px; background: #fff; }
.subtabs :disabled, .content-tabs :disabled { color: #aaa; }
.table-tools { display: flex; justify-content: flex-end; height: 31px; padding-top: 5px; }
.table-tools button { width: 60px; height: 22px; border: 1px solid #aaa; background: #e6e1e6; }
.table-box { height: 230px; overflow: hidden; background: #fff; }
table { width: 100%; height: 212px; table-layout: fixed; border-collapse: separate; border-spacing: 0; }
.c-name { width: 317px; }
.c-preview { width: 318px; }
th, td { padding: 0 3px; text-align: left; font-weight: 400; white-space: nowrap; overflow: hidden; border-right: 1px solid #f3eff3; border-bottom: 1px solid #f3eff3; }
th { height: 26px; padding: 3px 5px 0; border-right: 2px solid #e8e4e8; }
td { color: #777; }
td:first-child { padding: 0 0 0 13px; color: #111; }
td svg { display: inline-block; vertical-align: middle; margin-right: 4px; }
.content-tabs { display: flex; align-items: flex-end; height: 28px; padding-left: 2px; border-bottom: 1px solid var(--soft); margin-bottom: 1px; }
.content-tabs button { height: 20px; padding: 0 6px; border: 1px solid var(--soft); border-width: 1px 1px 0 0; white-space: nowrap; }
.content-tabs .on { height: 23px; padding: 0 6px 3px; background: #fff; }
.content { flex: 1; border: 1px solid #777c84; border-bottom: 0; }
.status { display: flex; align-items: center; justify-content: flex-end; gap: 5px; height: 26px; padding-right: 6px; }

/* Taskbar */
.taskbar { display: flex; height: 42px; background: #020b14; color: #f2f2f2; }
.taskbar button { position: relative; z-index: 2; display: flex; align-items: center; justify-content: center; }
.start { width: 51px; }
.find { display: flex; align-items: center; gap: 12px; width: 363px; padding-left: 12px; background: var(--pane); }
.find input { flex: 1; border: 0; padding: 0; background: none; font: 15px/20px var(--segoe); }
.find input::placeholder { color: #333; opacity: 1; }
.apps { display: flex; }
.apps button { width: 52px; height: 42px; }
.apps .active { background: #ffffff2e; border-bottom: 2px solid #76b9ed; }
.tray { display: flex; align-items: center; gap: 8px; margin-left: auto; padding-right: 3px; font: 12px/19px var(--segoe); text-align: center; }
.peek { width: 1px; height: 42px; background: #5a6068; }
```
